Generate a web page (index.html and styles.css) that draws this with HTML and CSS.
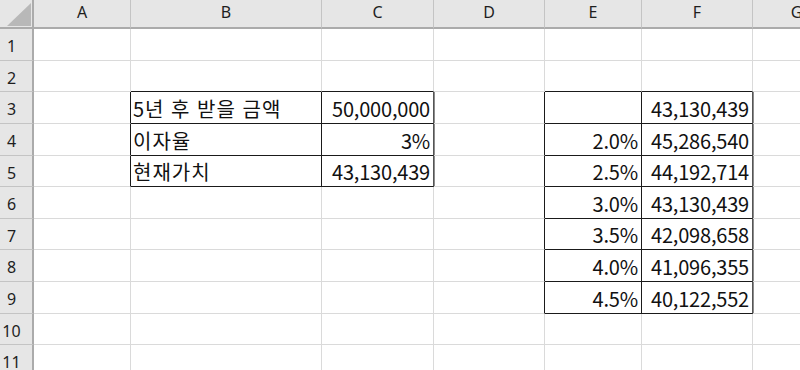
FILE: index.html
```html
<!DOCTYPE html>
<html lang="ko">
<head>
<meta charset="utf-8">
<title>Sheet</title>
<link rel="stylesheet" href="styles.css">
</head>
<body>
<div class="sheet">
  <!-- header row -->
  <div class="corner"><svg width="34" height="29" viewBox="0 0 34 29"><polygon points="31,3 31,26 7,26" fill="#b8b8b8"/></svg></div>
  <div class="ch">A</div>
  <div class="ch">B</div>
  <div class="ch">C</div>
  <div class="ch">D</div>
  <div class="ch">E</div>
  <div class="ch">F</div>
  <div class="ch">G</div>

  <!-- row 1 -->
  <div class="rh">1</div>
  <div class="c"></div><div class="c"></div><div class="c"></div><div class="c"></div><div class="c"></div><div class="c"></div><div class="c"></div>

  <!-- row 2 -->
  <div class="rh">2</div>
  <div class="c"></div><div class="c kb"></div><div class="c kb"></div><div class="c"></div><div class="c kb"></div><div class="c kb"></div><div class="c"></div>

  <!-- row 3 -->
  <div class="rh">3</div>
  <div class="c kr"></div>
  <div class="c t l">5년 후 받을 금액</div>
  <div class="c t r edge">50,000,000</div>
  <div class="c kr"></div>
  <div class="c t r"></div>
  <div class="c t r edge">43,130,439</div>
  <div class="c"></div>

  <!-- row 4 -->
  <div class="rh">4</div>
  <div class="c kr"></div>
  <div class="c t l">이자율</div>
  <div class="c t r edge">3%</div>
  <div class="c kr"></div>
  <div class="c t r">2.0%</div>
  <div class="c t r edge">45,286,540</div>
  <div class="c"></div>

  <!-- row 5 -->
  <div class="rh">5</div>
  <div class="c kr"></div>
  <div class="c t l">현재가치</div>
  <div class="c t r edge">43,130,439</div>
  <div class="c kr"></div>
  <div class="c t r">2.5%</div>
  <div class="c t r edge">44,192,714</div>
  <div class="c"></div>

  <!-- row 6 -->
  <div class="rh">6</div>
  <div class="c"></div><div class="c"></div><div class="c"></div>
  <div class="c kr"></div>
  <div class="c t r">3.0%</div>
  <div class="c t r edge">43,130,439</div>
  <div class="c"></div>

  <!-- row 7 -->
  <div class="rh">7</div>
  <div class="c"></div><div class="c"></div><div class="c"></div>
  <div class="c kr"></div>
  <div class="c t r">3.5%</div>
  <div class="c t r edge">42,098,658</div>
  <div class="c"></div>

  <!-- row 8 -->
  <div class="rh">8</div>
  <div class="c"></div><div class="c"></div><div class="c"></div>
  <div class="c kr"></div>
  <div class="c t r">4.0%</div>
  <div class="c t r edge">41,096,355</div>
  <div class="c"></div>

  <!-- row 9 -->
  <div class="rh">9</div>
  <div class="c"></div><div class="c"></div><div class="c"></div>
  <div class="c kr"></div>
  <div class="c t r">4.5%</div>
  <div class="c t r edge">40,122,552</div>
  <div class="c"></div>

  <!-- row 10 -->
  <div class="rh">10</div>
  <div class="c"></div><div class="c"></div><div class="c"></div><div class="c"></div><div class="c"></div><div class="c"></div><div class="c"></div>

  <!-- row 11 -->
  <div class="rh">11</div>
  <div class="c"></div><div class="c"></div><div class="c"></div><div class="c"></div><div class="c"></div><div class="c"></div><div class="c"></div>
</div>
</body>
</html>
```

FILE: styles.css
```css
html, body {
  margin: 0;
  padding: 0;
  background: #ffffff;
  overflow: hidden;
  width: 800px;
  height: 370px;
}

.sheet {
  display: grid;
  grid-template-columns: 34px 97px 191px 112px 111px 97px 111px 88px;
  grid-template-rows: 29px 32px 31px 32px 32px 31px 32px 31px 32px 32px 31px 32px;
  width: 841px;
  font-family: "Noto Sans CJK KR", "Noto Sans", sans-serif;
  color: #000;
}

.corner {
  background: #e6e6e6;
  box-sizing: border-box;
  border-right: 2px solid #ababab;
  border-bottom: 2px solid #ababab;
  overflow: hidden;
}

.corner svg {
  display: block;
}

.ch {
  background: #e6e6e6;
  box-sizing: border-box;
  border-right: 1px solid #c4c4c4;
  border-bottom: 2px solid #ababab;
  display: flex;
  align-items: center;
  justify-content: center;
  padding-bottom: 3px;
  font-family: "Noto Sans", "Open Sans", sans-serif;
  font-size: 16px;
  color: #1e1e1e;
}

.rh {
  background: #e6e6e6;
  box-sizing: border-box;
  border-right: 2px solid #ababab;
  border-bottom: 1px solid #c4c4c4;
  display: flex;
  align-items: center;
  justify-content: center;
  padding-right: 9px;
  padding-top: 3px;
  font-family: "Noto Sans", "Open Sans", sans-serif;
  font-size: 16px;
  color: #1e1e1e;
}

.c {
  box-sizing: border-box;
  border-right: 1px solid #dadada;
  border-bottom: 1px solid #dadada;
  display: flex;
  align-items: center;
  white-space: nowrap;
  font-size: 20px;
  padding-top: 1px;
  color: #111;
}

.t {
  border-right-color: #1a1a1a;
  border-bottom-color: #1a1a1a;
}

.kr {
  border-right-color: #1a1a1a;
}

.kb {
  border-bottom-color: #1a1a1a;
}

.l {
  justify-content: flex-start;
  padding-left: 2px;
  letter-spacing: 1px;
}

.r {
  justify-content: flex-end;
  padding-right: 3px;
  letter-spacing: -0.2px;
}

.edge {
  border-right-color: #555555;
  box-shadow: 1px 0 0 #8c8c8c;
}
```
